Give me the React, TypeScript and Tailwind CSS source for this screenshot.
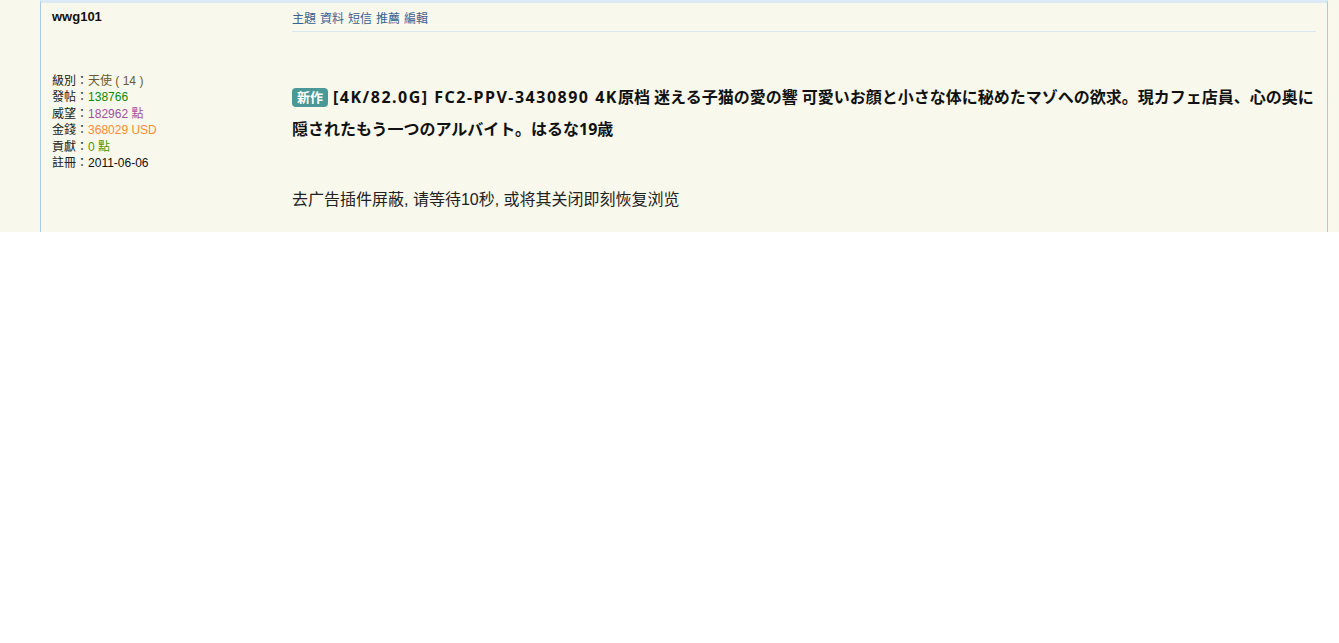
import React from "react";

const stats = [
  { label: "級別", value: "天使 ( 14 )", color: "text-[#6b5a2e]" },
  { label: "發帖", value: "138766", color: "text-[#0a8a0a]" },
  { label: "威望", value: "182962 點", color: "text-[#a0509f]" },
  { label: "金錢", value: "368029 USD", color: "text-[#ff8a33]" },
  { label: "貢獻", value: "0 點", color: "text-[#4b9a00]" },
  { label: "註冊", value: "2011-06-06", color: "text-[#111]" },
];

const links = ["主題", "資料", "短信", "推薦", "編輯"];

export default function App() {
  return (
    <div className="w-full h-[232px] bg-[#f8f8ec] font-['Liberation_Sans','Noto_Sans_CJK_TC',sans-serif]">
      <div className="ml-[40px] mr-[11px] h-full flex border-l border-r border-[#a6c9e6] border-t-[3px] border-t-[#dbeaf4]">
        {/* Author column */}
        <div className="w-[251px] shrink-0 pl-[11px] pt-[6px]">
          <div className="text-[13px] leading-[16px] font-bold text-[#111]">wwg101</div>
          <div className="mt-[48px] text-[12px] leading-[16.4px] text-[#222]">
            {stats.map((s) => (
              <div key={s.label}>
                {s.label}：<span className={s.color}>{s.value}</span>
              </div>
            ))}
          </div>
        </div>

        {/* Post column */}
        <div className="flex-1 pr-[11px]">
          <div className="pt-[8px] pb-[4px] border-b border-[#d8e8f0] text-[12px] leading-[16px] text-[#3a5f94] flex gap-[4px]">
            {links.map((l) => (
              <a key={l} href="#" className="hover:underline">
                {l}
              </a>
            ))}
          </div>

          <h1 className="mt-[49px] text-[16px] leading-[32px] font-bold text-[#111] font-['Noto_Sans','Noto_Sans_CJK_JP',sans-serif]">
            <span className="inline-block align-[1px] mr-[5px] px-[5px] h-[19px] leading-[19px] rounded-[4px] bg-[#4a9898] text-white text-[13px]">
              新作
            </span>
            <span className="tracking-[1.5px]">[4K/82.0G] FC2-PPV-3430890 4K</span>原档 迷える子猫の愛の響 可愛いお顔と小さな体に秘めたマゾへの欲求。現カフェ店員、心の奥に隠されたもう一つのアルバイト。はるな19歳
          </h1>

          <p className="mt-[43px] text-[16px] leading-[24px] text-[#222] font-['Liberation_Sans','Noto_Sans_CJK_SC',sans-serif]">
            去广告插件屏蔽, 请等待10秒, 或将其关闭即刻恢复浏览
          </p>
        </div>
      </div>
    </div>
  );
}
